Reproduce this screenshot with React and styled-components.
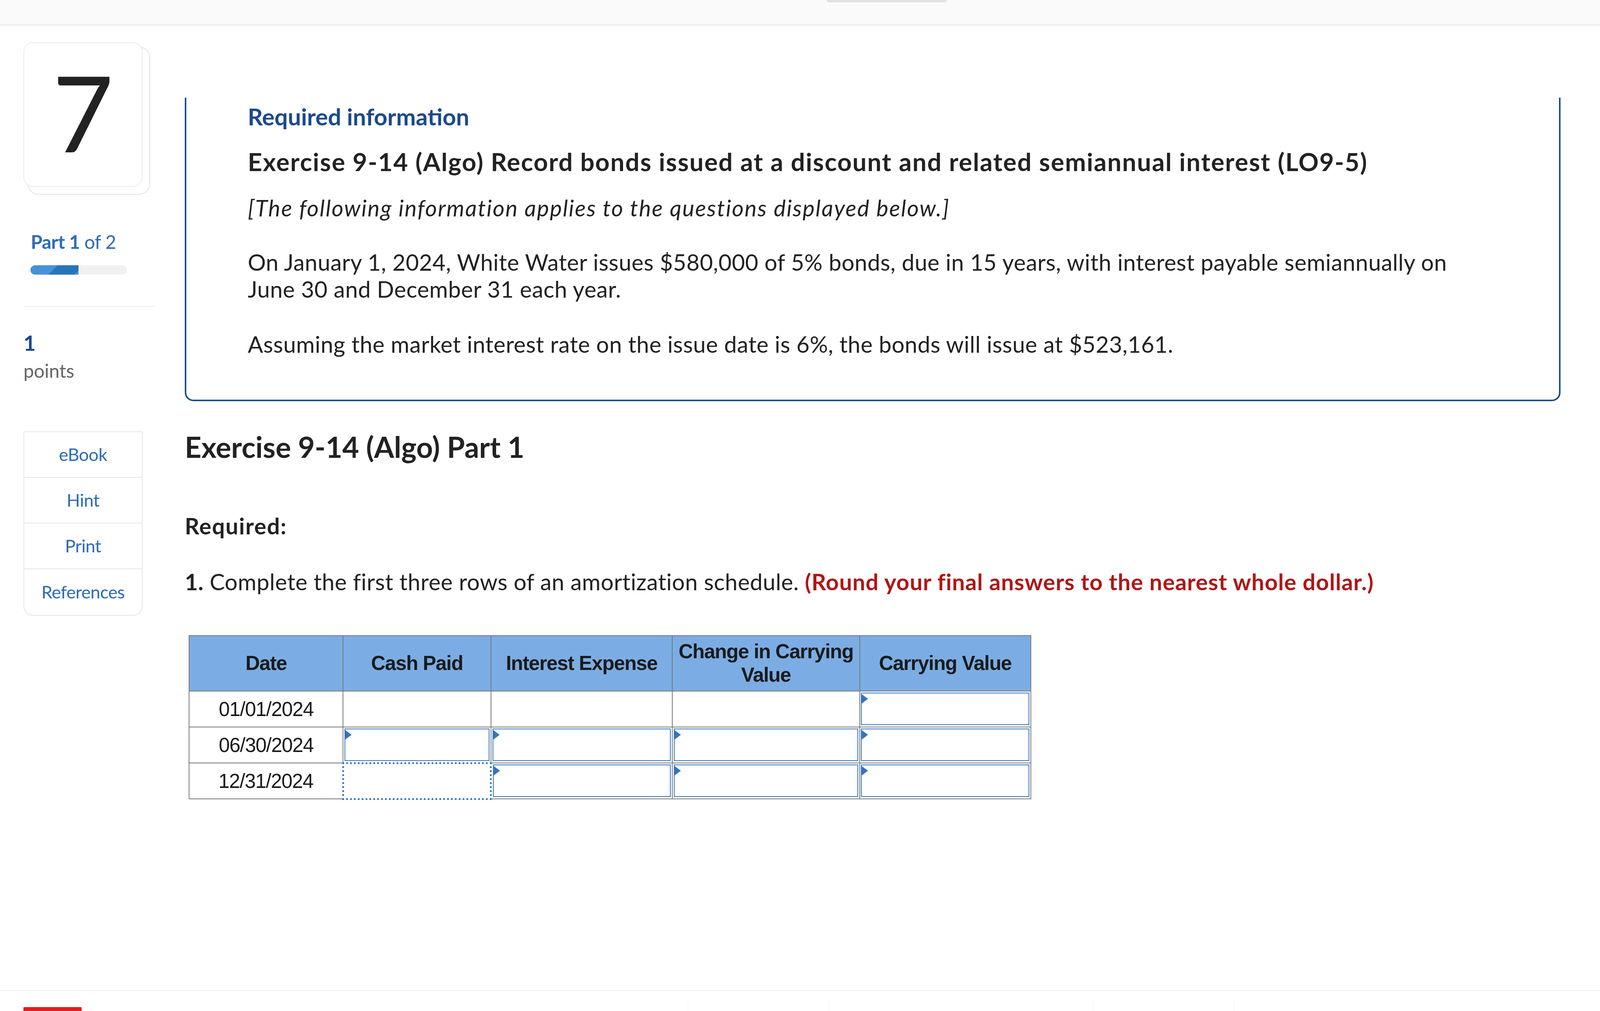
import React from 'react';
import styled, { createGlobalStyle } from 'styled-components';

// Measurements come from a 4374 x 2588 capture; x() and y() keep them proportional to the viewport.
const x = (n) => `${+(n / 43.74).toFixed(4)}vw`;
const y = (n) => `${+(n / 25.88).toFixed(4)}vh`;

const GlobalStyle = createGlobalStyle`
  html, body {
    margin: 0;
    padding: 0;
    background: #fff;
  }
  body {
    font-family: Lato, "Open Sans", sans-serif;
    color: #222;
  }
  * {
    box-sizing: border-box;
  }
  p, h1, h2, h3 {
    margin: 0;
  }
`;

const Page = styled.div`
  width: 100vw;
  height: 100vh;
  display: flex;
  flex-direction: column;
  overflow: hidden;
`;

const TopBar = styled.header`
  flex: none;
  height: ${y(66)};
  background: #fafafa;
  border-bottom: ${y(4)} solid #efefef;
  padding-left: ${x(2260)};
`;

const Handle = styled.div`
  width: ${x(328)};
  height: ${y(6)};
  background: #e3e1e4;
  border-radius: 0 0 ${x(40)} ${x(40)};
`;

const Main = styled.main`
  flex: 1;
  min-height: 0;
  display: flex;
  gap: ${x(81)};
  padding: ${y(42)} ${x(108)} 0 ${x(64)};
`;

/* ---------- left rail ---------- */

const Sidebar = styled.aside`
  flex: none;
  width: ${x(360)};
  display: flex;
  flex-direction: column;
`;

const NumberCard = styled.div`
  width: ${x(326)};
  height: ${y(370)};
  border: ${y(3)} solid #ebebeb;
  border-radius: ${y(24)};
  background: #fff;
  box-shadow: ${x(16)} ${y(16)} 0 ${y(2)} #fff, ${x(16)} ${y(16)} 0 ${y(5)} #ebebeb;
  display: flex;
  align-items: center;
  justify-content: center;
  padding-bottom: ${y(14)};
  font-size: ${y(270)};
  line-height: 1;
  color: #222;
`;

const PartLabel = styled.div`
  margin: ${y(112)} 0 0 ${x(20)};
  font-size: ${y(48)};
  line-height: 1.2;
  letter-spacing: -0.01em;
  color: #2d6cb5;

  b {
    font-weight: 700;
  }
`;

const Progress = styled.div`
  margin: ${y(31)} 0 0 ${x(19)};
  width: ${x(264)};
  height: ${y(24)};
  border-radius: ${y(12)};
  background: #f1f1f1;
  overflow: hidden;
`;

const ProgressFill = styled.div`
  width: ${(p) => p.$pct}%;
  height: 100%;
  background: linear-gradient(135deg, #4891d7 0 47%, #2873b9 47% 93%, #4891d7 93%);
`;

const Rule = styled.hr`
  margin: ${y(80)} 0 0;
  border: none;
  height: ${y(2)};
  background: #ececec;
`;

const PointsValue = styled.div`
  margin-top: ${y(61)};
  font-size: ${y(54)};
  font-weight: 700;
  line-height: 1.2;
  color: #1b4a8b;
`;

const PointsLabel = styled.div`
  margin-top: ${y(10)};
  font-size: ${y(48)};
  line-height: 1.2;
  color: #666;
`;

const ToolList = styled.nav`
  margin-top: ${y(126)};
  width: ${x(326)};
  border: ${y(3)} solid #e6e6e6;
  border-radius: 0 0 ${y(24)} ${y(24)};
  display: flex;
  flex-direction: column;
`;

const ToolItem = styled.a`
  height: ${y(117)};
  display: flex;
  align-items: center;
  justify-content: center;
  font-size: ${y(45)};
  letter-spacing: -0.01em;
  color: #2d6cb5;
  text-decoration: none;
  border-bottom: ${y(3)} solid #e6e6e6;

  &:last-child {
    border-bottom: none;
  }
`;

/* ---------- question ---------- */

const Content = styled.section`
  flex: 1;
  min-width: 0;
  display: flex;
  flex-direction: column;
`;

const InfoBox = styled.div`
  margin-top: ${y(142)};
  border: ${y(4)} solid #1c4d8f;
  border-top: none;
  border-radius: 0 0 ${y(22)} ${y(22)};
  padding: ${y(12)} ${x(200)} ${y(108)} ${x(168)};
`;

const InfoHeading = styled.h3`
  font-size: ${y(60)};
  font-weight: 700;
  line-height: 1.2;
  color: #1b4a8b;
`;

const InfoTitle = styled.h2`
  margin-top: ${y(42)};
  font-size: ${y(64)};
  font-weight: 700;
  line-height: 1.2;
  letter-spacing: 0.031em;
  color: #222;
`;

const InfoNote = styled.p`
  margin-top: ${y(44)};
  font-size: ${y(58)};
  font-style: italic;
  line-height: 1.2;
  letter-spacing: 0.04em;
`;

const InfoText = styled.p`
  margin-top: ${(p) => y(p.$gap)};
  font-size: ${y(58)};
  line-height: ${y(69)};
  letter-spacing: 0.009em;
`;

const PartTitle = styled.h1`
  margin-top: ${y(73)};
  font-size: ${y(74)};
  font-weight: 700;
  line-height: 1.2;
  color: #222;
`;

const Required = styled.h3`
  margin-top: ${y(122)};
  font-size: ${y(58)};
  font-weight: 700;
  line-height: 1.2;
  letter-spacing: 0.03em;
`;

const Instruction = styled.p`
  margin-top: ${y(73)};
  font-size: ${y(58)};
  line-height: 1.2;
  letter-spacing: 0.009em;

  b {
    font-weight: 700;
  }
`;

const Warn = styled.b`
  color: #ae1717;
  letter-spacing: 0.019em;
`;

/* ---------- schedule table ---------- */

const Schedule = styled.table`
  width: ${x(2301)};
  margin: ${y(103)} 0 0 ${x(11)};
  border-collapse: collapse;
  table-layout: fixed;
  font-family: "Liberation Sans", Arial, sans-serif;
  font-size: ${y(51)};
  letter-spacing: -0.025em;
  color: #1a1a1a;
`;

const HeadCell = styled.th`
  width: ${(p) => x(p.$w)};
  height: ${y(142)};
  padding: 0 ${x(6)};
  background: #7badE4;
  border: ${y(3)} solid #787878;
  font-weight: 700;
  line-height: ${y(60)};
  text-align: center;
`;

// a focused cell gets a wider dotted edge, which wins over the grid lines in the collapsed table
const Cell = styled.td`
  height: ${y(92)};
  padding: ${(p) => (p.$entry ? `${y(3)} ${x(3)} 0` : '0')};
  vertical-align: ${(p) => (p.$entry ? 'top' : 'middle')};
  border: ${(p) => (p.$focus ? `${y(6)} dotted #3474bf` : `${y(3)} solid #787878`)};
  text-align: center;
  background: #fff;
`;

const EntryBox = styled.div`
  position: relative;
  height: ${y(83)};
  border: ${y(3)} solid #3474bf;
  background: #fff;
`;

const EntryMark = styled.span`
  position: absolute;
  left: 0;
  top: ${y(2)};
  width: 0;
  height: 0;
  border-top: ${y(13)} solid transparent;
  border-bottom: ${y(13)} solid transparent;
  border-left: ${x(18)} solid #3474bf;
`;

const EntryField = styled.input`
  display: block;
  width: 100%;
  min-width: 0;
  height: 100%;
  border: none;
  outline: none;
  background: transparent;
  font: inherit;
  text-align: right;
  padding: 0 ${x(12)};
`;

const Footer = styled.footer`
  flex: none;
  height: ${y(53)};
  border-top: ${y(3)} solid #f0f0f0;
  display: flex;
  padding-left: ${x(64)};
`;

const Brand = styled.div`
  width: ${x(1816)};
  display: flex;
  align-items: flex-end;
`;

const BrandMark = styled.div`
  width: ${x(159)};
  height: ${y(10)};
  background: #e31b23;
  border-radius: ${y(2)} ${y(2)} 0 0;
`;

const FooterSlot = styled.div`
  width: ${(p) => (p.$w ? x(p.$w) : 'auto')};
  flex: ${(p) => (p.$w ? 'none' : '1')};
  margin-top: ${y(20)};
  border-left: ${x(2)} solid #f0f0f0;
`;

const columns = [
  { label: 'Date', w: 421 },
  { label: 'Cash Paid', w: 404 },
  { label: 'Interest Expense', w: 496 },
  { label: 'Change in Carrying Value', w: 512 },
  { label: 'Carrying Value', w: 468 },
];

// 'e' = entry box, 'f' = focused (dotted) entry, '' = blank cell
const rows = [
  { date: '01/01/2024', cells: ['', '', '', 'e'] },
  { date: '06/30/2024', cells: ['e', 'e', 'e', 'e'] },
  { date: '12/31/2024', cells: ['f', 'e', 'e', 'e'] },
];

function Entry() {
  return (
    <EntryBox>
      <EntryMark />
      <EntryField type="text" size={1} aria-label="amount" />
    </EntryBox>
  );
}

export default function App() {
  return (
    <Page>
      <GlobalStyle />
      <TopBar>
        <Handle />
      </TopBar>

      <Main>
        <Sidebar>
          <NumberCard>7</NumberCard>
          <PartLabel>
            <b>Part 1</b> of 2
          </PartLabel>
          <Progress>
            <ProgressFill $pct={50} />
          </Progress>
          <Rule />
          <PointsValue>1</PointsValue>
          <PointsLabel>points</PointsLabel>
          <ToolList>
            <ToolItem href="#">eBook</ToolItem>
            <ToolItem href="#">Hint</ToolItem>
            <ToolItem href="#">Print</ToolItem>
            <ToolItem href="#">References</ToolItem>
          </ToolList>
        </Sidebar>

        <Content>
          <InfoBox>
            <InfoHeading>Required information</InfoHeading>
            <InfoTitle>
              Exercise 9-14 (Algo) Record bonds issued at a discount and related semiannual interest (LO9-5)
            </InfoTitle>
            <InfoNote>[The following information applies to the questions displayed below.]</InfoNote>
            <InfoText $gap={70}>
              On January 1, 2024, White Water issues $580,000 of 5% bonds, due in 15 years, with interest payable
              semiannually on June 30 and December 31 each year.
            </InfoText>
            <InfoText $gap={72}>
              Assuming the market interest rate on the issue date is 6%, the bonds will issue at $523,161.
            </InfoText>
          </InfoBox>

          <PartTitle>Exercise 9-14 (Algo) Part 1</PartTitle>
          <Required>Required:</Required>
          <Instruction>
            <b>1.</b> Complete the first three rows of an amortization schedule.{' '}
            <Warn>(Round your final answers to the nearest whole dollar.)</Warn>
          </Instruction>

          <Schedule>
            <thead>
              <tr>
                {columns.map((c) => (
                  <HeadCell key={c.label} $w={c.w}>
                    {c.label}
                  </HeadCell>
                ))}
              </tr>
            </thead>
            <tbody>
              {rows.map((r) => (
                <tr key={r.date}>
                  <Cell>{r.date}</Cell>
                  {r.cells.map((kind, i) => (
                    <Cell key={i} $entry={kind === 'e'} $focus={kind === 'f'}>
                      {kind === 'e' && <Entry />}
                      {kind === 'f' && <EntryField type="text" size={1} aria-label="amount" />}
                    </Cell>
                  ))}
                </tr>
              ))}
            </tbody>
          </Schedule>
        </Content>
      </Main>

      <Footer>
        <Brand>
          <BrandMark />
        </Brand>
        <FooterSlot $w={385} />
        <FooterSlot $w={723} />
        <FooterSlot $w={387} />
        <FooterSlot />
      </Footer>
    </Page>
  );
}
